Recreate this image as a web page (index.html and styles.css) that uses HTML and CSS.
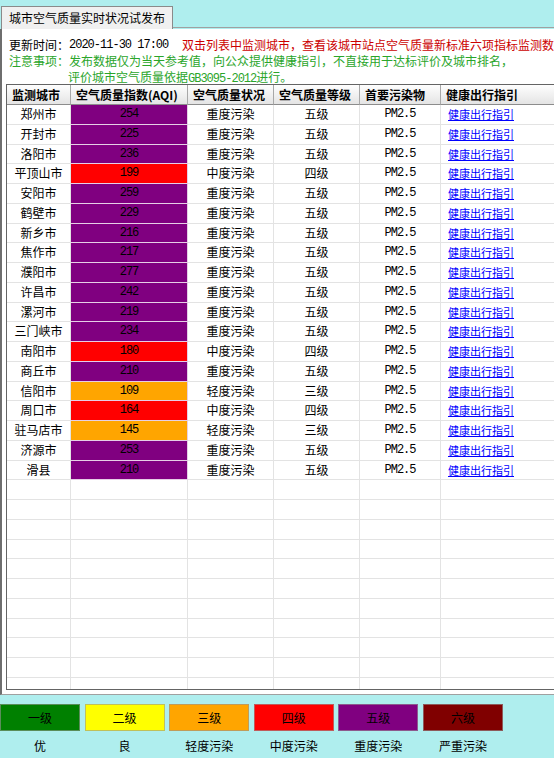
FILE: index.html
```html
<!DOCTYPE html>
<html lang="zh">
<head>
<meta charset="utf-8">
<title>城市空气质量实时状况试发布</title>
<link rel="stylesheet" href="styles.css">
</head>
<body>
<div class="tabs">
  <div class="tab">城市空气质量实时状况试发布</div>
  <div class="tabfill"></div>
</div>
<div class="panel">
  <div class="info">
    <div class="l1">更新时间：<span class="mono time">2020-11-30 17:00</span><span class="red">双击列表中监测城市，查看该城市站点空气质量新标准六项指标监测数据</span></div>
    <div class="l2 green">注意事项：发布数据仅为当天参考值，向公众提供健康指引，不直接用于达标评价及城市排名，</div>
    <div class="l3 green">评价城市空气质量依据<span class="mono">GB3095-2012</span>进行。</div>
  </div>
  <div class="table">
    <div class="grid">
      <div class="th">监测城市</div><div class="th">空气质量指数(AQI)</div><div class="th">空气质量状况</div><div class="th">空气质量等级</div><div class="th">首要污染物</div><div class="th">健康出行指引</div>

      <div class="td">郑州市</div><div class="td aqi c5">254</div><div class="td">重度污染</div><div class="td">五级</div><div class="td mono pm">PM2.5</div><div class="td link"><a href="#">健康出行指引</a></div>
      <div class="td">开封市</div><div class="td aqi c5">225</div><div class="td">重度污染</div><div class="td">五级</div><div class="td mono pm">PM2.5</div><div class="td link"><a href="#">健康出行指引</a></div>
      <div class="td">洛阳市</div><div class="td aqi c5">236</div><div class="td">重度污染</div><div class="td">五级</div><div class="td mono pm">PM2.5</div><div class="td link"><a href="#">健康出行指引</a></div>
      <div class="td">平顶山市</div><div class="td aqi c4">199</div><div class="td">中度污染</div><div class="td">四级</div><div class="td mono pm">PM2.5</div><div class="td link"><a href="#">健康出行指引</a></div>
      <div class="td">安阳市</div><div class="td aqi c5">259</div><div class="td">重度污染</div><div class="td">五级</div><div class="td mono pm">PM2.5</div><div class="td link"><a href="#">健康出行指引</a></div>
      <div class="td">鹤壁市</div><div class="td aqi c5">229</div><div class="td">重度污染</div><div class="td">五级</div><div class="td mono pm">PM2.5</div><div class="td link"><a href="#">健康出行指引</a></div>
      <div class="td">新乡市</div><div class="td aqi c5">216</div><div class="td">重度污染</div><div class="td">五级</div><div class="td mono pm">PM2.5</div><div class="td link"><a href="#">健康出行指引</a></div>
      <div class="td">焦作市</div><div class="td aqi c5">217</div><div class="td">重度污染</div><div class="td">五级</div><div class="td mono pm">PM2.5</div><div class="td link"><a href="#">健康出行指引</a></div>
      <div class="td">濮阳市</div><div class="td aqi c5">277</div><div class="td">重度污染</div><div class="td">五级</div><div class="td mono pm">PM2.5</div><div class="td link"><a href="#">健康出行指引</a></div>
      <div class="td">许昌市</div><div class="td aqi c5">242</div><div class="td">重度污染</div><div class="td">五级</div><div class="td mono pm">PM2.5</div><div class="td link"><a href="#">健康出行指引</a></div>
      <div class="td">漯河市</div><div class="td aqi c5">219</div><div class="td">重度污染</div><div class="td">五级</div><div class="td mono pm">PM2.5</div><div class="td link"><a href="#">健康出行指引</a></div>
      <div class="td">三门峡市</div><div class="td aqi c5">234</div><div class="td">重度污染</div><div class="td">五级</div><div class="td mono pm">PM2.5</div><div class="td link"><a href="#">健康出行指引</a></div>
      <div class="td">南阳市</div><div class="td aqi c4">180</div><div class="td">中度污染</div><div class="td">四级</div><div class="td mono pm">PM2.5</div><div class="td link"><a href="#">健康出行指引</a></div>
      <div class="td">商丘市</div><div class="td aqi c5">210</div><div class="td">重度污染</div><div class="td">五级</div><div class="td mono pm">PM2.5</div><div class="td link"><a href="#">健康出行指引</a></div>
      <div class="td">信阳市</div><div class="td aqi c3">109</div><div class="td">轻度污染</div><div class="td">三级</div><div class="td mono pm">PM2.5</div><div class="td link"><a href="#">健康出行指引</a></div>
      <div class="td">周口市</div><div class="td aqi c4">164</div><div class="td">中度污染</div><div class="td">四级</div><div class="td mono pm">PM2.5</div><div class="td link"><a href="#">健康出行指引</a></div>
      <div class="td">驻马店市</div><div class="td aqi c3">145</div><div class="td">轻度污染</div><div class="td">三级</div><div class="td mono pm">PM2.5</div><div class="td link"><a href="#">健康出行指引</a></div>
      <div class="td">济源市</div><div class="td aqi c5">253</div><div class="td">重度污染</div><div class="td">五级</div><div class="td mono pm">PM2.5</div><div class="td link"><a href="#">健康出行指引</a></div>
      <div class="td">滑县</div><div class="td aqi c5">210</div><div class="td">重度污染</div><div class="td">五级</div><div class="td mono pm">PM2.5</div><div class="td link"><a href="#">健康出行指引</a></div>

      <div class="td"></div><div class="td"></div><div class="td"></div><div class="td"></div><div class="td"></div><div class="td"></div>
      <div class="td"></div><div class="td"></div><div class="td"></div><div class="td"></div><div class="td"></div><div class="td"></div>
      <div class="td"></div><div class="td"></div><div class="td"></div><div class="td"></div><div class="td"></div><div class="td"></div>
      <div class="td"></div><div class="td"></div><div class="td"></div><div class="td"></div><div class="td"></div><div class="td"></div>
      <div class="td"></div><div class="td"></div><div class="td"></div><div class="td"></div><div class="td"></div><div class="td"></div>
      <div class="td"></div><div class="td"></div><div class="td"></div><div class="td"></div><div class="td"></div><div class="td"></div>
      <div class="td"></div><div class="td"></div><div class="td"></div><div class="td"></div><div class="td"></div><div class="td"></div>
      <div class="td"></div><div class="td"></div><div class="td"></div><div class="td"></div><div class="td"></div><div class="td"></div>
      <div class="td"></div><div class="td"></div><div class="td"></div><div class="td"></div><div class="td"></div><div class="td"></div>
      <div class="td"></div><div class="td"></div><div class="td"></div><div class="td"></div><div class="td"></div><div class="td"></div>
      <div class="td"></div><div class="td"></div><div class="td"></div><div class="td"></div><div class="td"></div><div class="td"></div>
    </div>
  </div>
</div>
<div class="legend">
  <div class="item"><div class="box l1c">一级</div><div class="lab">优</div></div>
  <div class="item"><div class="box l2c">二级</div><div class="lab">良</div></div>
  <div class="item"><div class="box l3c">三级</div><div class="lab">轻度污染</div></div>
  <div class="item"><div class="box l4c">四级</div><div class="lab">中度污染</div></div>
  <div class="item"><div class="box l5c">五级</div><div class="lab">重度污染</div></div>
  <div class="item"><div class="box l6c">六级</div><div class="lab">严重污染</div></div>
</div>
</body>
</html>
```
FILE: styles.css
```css
html, body {
  margin: 0;
  padding: 0;
}
body {
  width: 554px;
  height: 758px;
  overflow: hidden;
  background: #afeeee;
  font-family: "Noto Sans CJK SC", "Noto Sans", sans-serif;
  font-size: 12px;
  color: #000;
}
.mono {
  font-family: "Liberation Mono", "Noto Sans CJK SC", monospace;
  font-size: 12px;
  letter-spacing: -1px;
}
.tabs {
  display: flex;
  height: 29px;
  align-items: flex-end;
}
.tab {
  box-sizing: border-box;
  margin-left: 1px;
  width: 172px;
  height: 23px;
  border: 1px solid #8a8a8a;
  border-bottom: none;
  background: #f0f0f0;
  padding-left: 7px;
  line-height: 21px;
  white-space: nowrap;
  flex: none;
}
.tabfill {
  flex: 1;
  height: 0;
  border-bottom: 1px solid #a0a0a0;
  margin-bottom: 1px;
}
.panel {
  box-sizing: border-box;
  height: 666px;
  background: #fff;
  border-left: 2px solid #6e6e6e;
  border-bottom: 1px solid #a0a0a0;
  overflow: hidden;
}
.info {
  padding: 7px 0 0 7px;
  white-space: nowrap;
}
.l1 { height: 17px; line-height: 17px; overflow: hidden; }
.l2 { height: 16px; line-height: 16px; }
.l3 { height: 15px; line-height: 15px; padding-left: 59px; }
.time {
  display: inline-block;
  vertical-align: top;
  box-sizing: border-box;
  width: 113px;
  height: 17px;
  padding-top: 1px;
  line-height: 16px;
  overflow: hidden;
}
.red { color: #cc0000; }
.green { color: #2aa52a; }
.table {
  margin-left: 4px;
  width: 700px;
  height: 604px;
  border: 1px solid #646464;
  border-right: none;
  overflow: hidden;
}
.grid {
  display: grid;
  grid-template-columns: 64px 117px 86px 86px 81px 200px;
  grid-template-rows: 20px;
  grid-auto-rows: 19.75px;
}
.th {
  box-sizing: border-box;
  background: linear-gradient(#fefefe, #e4e4e4);
  border-right: 1px solid #a8a8a8;
  border-bottom: 1px solid #8c8c8c;
  font-weight: bold;
  padding-left: 5px;
  line-height: 19px;
  white-space: nowrap;
  overflow: hidden;
}
.td {
  box-sizing: border-box;
  border-right: 1px solid #e3e3e3;
  border-bottom: 1px solid #e3e3e3;
  text-align: center;
  line-height: 18.75px;
  white-space: nowrap;
  overflow: hidden;
}
.aqi {
  font-family: "Liberation Mono", monospace;
  font-size: 12px;
  letter-spacing: -1px;
  border-color: #e6cfe6;
}
.c5 { background: #800080; }
.c4 { background: #ff0000; }
.c3 { background: #ffa500; }
.pm { line-height: 18.75px; }
.link {
  text-align: left;
  padding-left: 7px;
  font-size: 11px;
}
.link a {
  color: #0000ff;
  text-decoration: underline;
}
.legend {
  height: 63px;
  box-sizing: border-box;
  padding-top: 9px;
  display: grid;
  grid-template-columns: repeat(6, 80px);
  column-gap: 4.6px;
}
.item {
  display: flex;
  flex-direction: column;
  align-items: stretch;
}
.box {
  box-sizing: border-box;
  height: 27px;
  border: 1px solid rgba(150, 150, 150, 0.6);
  text-align: center;
  line-height: 25px;
}
.lab {
  margin-top: 5px;
  line-height: 20px;
  text-align: center;
}
.l1c { background: #008000; }
.l2c { background: #ffff00; }
.l3c { background: #ffa500; }
.l4c { background: #ff0000; }
.l5c { background: #800080; }
.l6c { background: #800000; }
```
